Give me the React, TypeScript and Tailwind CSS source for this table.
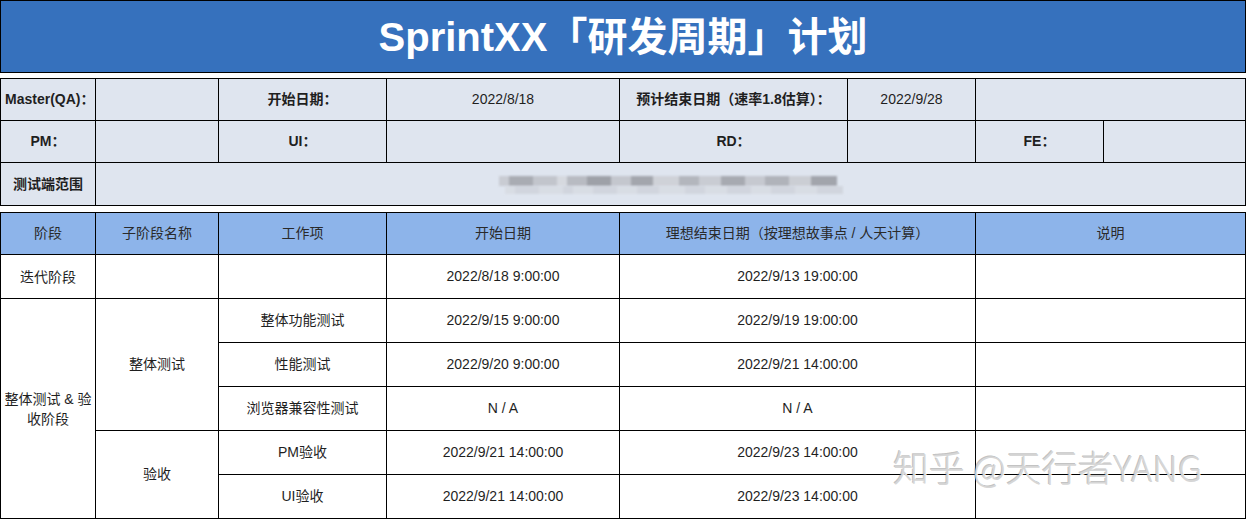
import React from 'react';

const font = { fontFamily: '"Liberation Sans", "Noto Sans CJK SC", sans-serif' };

const topCols = [95, 123, 168, 233, 228, 128, 128, 142];
const planCols = [95, 123, 168, 233, 356, 270];

const cell = "border border-black text-center align-middle px-1";

// mosaic blocks for the blurred scope text
const blurBlocks = [
  { w: 10, c: 'bg-[#c9ccd3]' },
  { w: 24, c: 'bg-[#a9acb3]' },
  { w: 24, c: 'bg-[#c2c5cc]' },
  { w: 10, c: 'bg-[#d6d9df]' },
  { w: 20, c: 'bg-[#b8bbc2]' },
  { w: 24, c: 'bg-[#9ea1a8]' },
  { w: 20, c: 'bg-[#c4c7ce]' },
  { w: 22, c: 'bg-[#a3a6ad]' },
  { w: 26, c: 'bg-[#cfd2d8]' },
  { w: 20, c: 'bg-[#b3b6bd]' },
  { w: 22, c: 'bg-[#c9ccd3]' },
  { w: 24, c: 'bg-[#a7aab1]' },
  { w: 20, c: 'bg-[#c6c9d0]' },
  { w: 24, c: 'bg-[#b0b3ba]' },
  { w: 22, c: 'bg-[#cbced4]' },
  { w: 26, c: 'bg-[#a2a5ac]' },
];

const BlurredText: React.FC = () => (
  <div className="flex flex-col">
    <div className="flex blur-[1px]">
      {blurBlocks.map((b, i) => (
        <div key={i} className={`h-[10px] ${b.c}`} style={{ width: b.w }} />
      ))}
    </div>
    <div className="flex blur-[1px] opacity-60 ml-[6px]">
      {blurBlocks.map((b, i) => (
        <div key={i} className={`h-[8px] ${i % 2 ? 'bg-[#c9ccd3]' : 'bg-[#d5d8de]'}`} style={{ width: b.w }} />
      ))}
    </div>
  </div>
);

interface Row {
  stage?: { text: React.ReactNode; span: number };
  sub?: { text: string; span: number };
  item: string;
  start: string;
  end: string;
}

const rows: Row[] = [
  { stage: { text: '迭代阶段', span: 1 }, sub: { text: '', span: 1 }, item: '', start: '2022/8/18 9:00:00', end: '2022/9/13 19:00:00' },
  {
    stage: { text: <><span className="whitespace-nowrap">整体测试 &amp; 验</span><br />收阶段</>, span: 6 },
    sub: { text: '整体测试', span: 3 },
    item: '整体功能测试', start: '2022/9/15 9:00:00', end: '2022/9/19 19:00:00',
  },
  { item: '性能测试', start: '2022/9/20 9:00:00', end: '2022/9/21 14:00:00' },
  { item: '浏览器兼容性测试', start: 'N / A', end: 'N / A' },
  { sub: { text: '验收', span: 2 }, item: 'PM验收', start: '2022/9/21 14:00:00', end: '2022/9/23 14:00:00' },
  { item: 'UI验收', start: '2022/9/21 14:00:00', end: '2022/9/23 14:00:00' },
];

export default function App() {
  return (
    <div className="relative w-[1247px] h-[520px] bg-white text-[14px] text-[#1f1f1f] overflow-hidden" style={font}>
      <div className="w-[1246px] h-[73px] bg-[#3671bd] border border-black flex items-center justify-center">
        <h1 className="text-white font-bold text-[40px] leading-none">SprintXX「研发周期」计划</h1>
      </div>

      <table className="mt-[5px] table-fixed border-collapse w-[1246px] bg-[#dfe5ef]">
        <colgroup>
          {topCols.map((w, i) => <col key={i} style={{ width: w }} />)}
        </colgroup>
        <tbody>
          <tr className="h-[42px]">
            <td className={`${cell} font-bold`}>Master(QA)：</td>
            <td className={cell}></td>
            <td className={`${cell} font-bold`}>开始日期：</td>
            <td className={cell}>2022/8/18</td>
            <td className={`${cell} font-bold`}>预计结束日期（速率1.8估算）：</td>
            <td className={cell}>2022/9/28</td>
            <td className={cell} colSpan={2}></td>
          </tr>
          <tr className="h-[42px]">
            <td className={`${cell} font-bold`}>PM：</td>
            <td className={cell}></td>
            <td className={`${cell} font-bold`}>UI：</td>
            <td className={cell}></td>
            <td className={`${cell} font-bold`}>RD：</td>
            <td className={cell}></td>
            <td className={`${cell} font-bold`}>FE：</td>
            <td className={cell}></td>
          </tr>
          <tr className="h-[43px]">
            <td className={`${cell} font-bold`}>测试端范围</td>
            <td className={cell} colSpan={7}>
              <div className="flex justify-center pt-[2px]">
                <BlurredText />
              </div>
            </td>
          </tr>
        </tbody>
      </table>

      <table className="mt-[6px] table-fixed border-collapse w-[1246px]">
        <colgroup>
          {planCols.map((w, i) => <col key={i} style={{ width: w }} />)}
        </colgroup>
        <thead>
          <tr className="h-[42px] bg-[#8db4ea] text-[#2a2a2a]">
            <th className={`${cell} font-normal`}>阶段</th>
            <th className={`${cell} font-normal`}>子阶段名称</th>
            <th className={`${cell} font-normal`}>工作项</th>
            <th className={`${cell} font-normal`}>开始日期</th>
            <th className={`${cell} font-normal`}>理想结束日期（按理想故事点 / 人天计算）</th>
            <th className={`${cell} font-normal`}>说明</th>
          </tr>
        </thead>
        <tbody>
          {rows.map((r, i) => (
            <tr key={i} className="h-[44px]">
              {r.stage && <td className="border border-black text-center align-middle px-0 leading-[20px]" rowSpan={r.stage.span}>{r.stage.text}</td>}
              {r.sub && <td className={cell} rowSpan={r.sub.span}>{r.sub.text}</td>}
              <td className={cell}>{r.item}</td>
              <td className={cell}>{r.start}</td>
              <td className={cell}>{r.end}</td>
              <td className={cell}></td>
            </tr>
          ))}
        </tbody>
      </table>

      <div
        className="absolute left-[893px] top-[448px] text-[36px] leading-none text-[#d6d6d6] whitespace-nowrap pointer-events-none font-light"
        style={{ fontFamily: '"Noto Sans CJK SC", "Liberation Sans", sans-serif', textShadow: '1px 1px 0 rgba(255,255,255,0.9), -1px -1px 0 rgba(120,120,120,0.45)' }}
      >
        知乎 @天行者YANG
      </div>
    </div>
  );
}
